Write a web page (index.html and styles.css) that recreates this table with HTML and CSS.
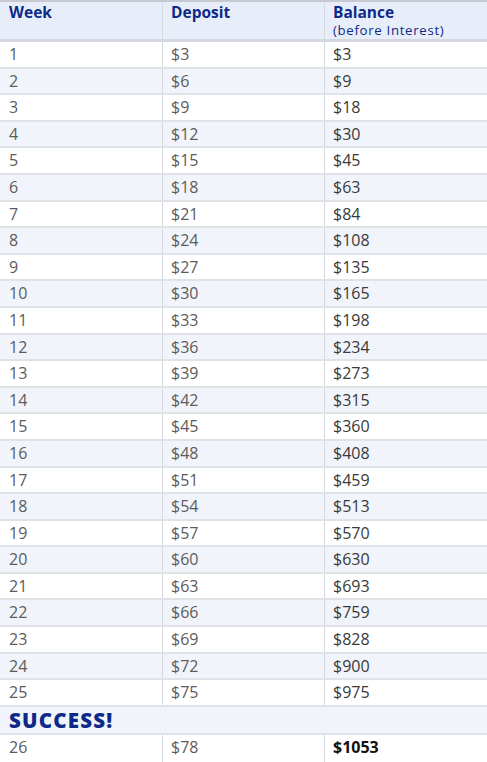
FILE: index.html
```html
<!DOCTYPE html>
<html>
<head>
<meta charset="utf-8">
<link rel="stylesheet" href="styles.css">
</head>
<body>
<div class="savings">
  <div class="row head">
    <div class="cell">Week</div>
    <div class="cell">Deposit</div>
    <div class="cell">Balance<span class="sub">(before Interest)</span></div>
  </div>
  <div class="row"><div class="cell">1</div><div class="cell">$3</div><div class="cell bal">$3</div></div>
  <div class="row alt"><div class="cell">2</div><div class="cell">$6</div><div class="cell bal">$9</div></div>
  <div class="row"><div class="cell">3</div><div class="cell">$9</div><div class="cell bal">$18</div></div>
  <div class="row alt"><div class="cell">4</div><div class="cell">$12</div><div class="cell bal">$30</div></div>
  <div class="row"><div class="cell">5</div><div class="cell">$15</div><div class="cell bal">$45</div></div>
  <div class="row alt"><div class="cell">6</div><div class="cell">$18</div><div class="cell bal">$63</div></div>
  <div class="row"><div class="cell">7</div><div class="cell">$21</div><div class="cell bal">$84</div></div>
  <div class="row alt"><div class="cell">8</div><div class="cell">$24</div><div class="cell bal">$108</div></div>
  <div class="row"><div class="cell">9</div><div class="cell">$27</div><div class="cell bal">$135</div></div>
  <div class="row alt"><div class="cell">10</div><div class="cell">$30</div><div class="cell bal">$165</div></div>
  <div class="row"><div class="cell">11</div><div class="cell">$33</div><div class="cell bal">$198</div></div>
  <div class="row alt"><div class="cell">12</div><div class="cell">$36</div><div class="cell bal">$234</div></div>
  <div class="row"><div class="cell">13</div><div class="cell">$39</div><div class="cell bal">$273</div></div>
  <div class="row alt"><div class="cell">14</div><div class="cell">$42</div><div class="cell bal">$315</div></div>
  <div class="row"><div class="cell">15</div><div class="cell">$45</div><div class="cell bal">$360</div></div>
  <div class="row alt"><div class="cell">16</div><div class="cell">$48</div><div class="cell bal">$408</div></div>
  <div class="row"><div class="cell">17</div><div class="cell">$51</div><div class="cell bal">$459</div></div>
  <div class="row alt"><div class="cell">18</div><div class="cell">$54</div><div class="cell bal">$513</div></div>
  <div class="row"><div class="cell">19</div><div class="cell">$57</div><div class="cell bal">$570</div></div>
  <div class="row alt"><div class="cell">20</div><div class="cell">$60</div><div class="cell bal">$630</div></div>
  <div class="row"><div class="cell">21</div><div class="cell">$63</div><div class="cell bal">$693</div></div>
  <div class="row alt"><div class="cell">22</div><div class="cell">$66</div><div class="cell bal">$759</div></div>
  <div class="row"><div class="cell">23</div><div class="cell">$69</div><div class="cell bal">$828</div></div>
  <div class="row alt"><div class="cell">24</div><div class="cell">$72</div><div class="cell bal">$900</div></div>
  <div class="row"><div class="cell">25</div><div class="cell">$75</div><div class="cell bal">$975</div></div>
  <div class="success">SUCCESS!</div>
  <div class="row final"><div class="cell">26</div><div class="cell">$78</div><div class="cell bal total">$1053</div></div>
</div>
</body>
</html>
```
FILE: styles.css
```css
html, body {
  margin: 0;
  padding: 0;
  background: #ffffff;
}
body {
  font-family: "Open Sans", Lato, sans-serif;
}
.savings {
  width: 487px;
  display: flex;
  flex-direction: column;
}
.row {
  display: grid;
  grid-template-columns: 162px 162px 163px;
  height: 26.6px;
  box-sizing: border-box;
  border-bottom: 2px solid #dfe2e7;
}
.row.alt { background: #f1f4fa; }
.cell {
  padding-left: 8px;
  border-left: 1px solid #d6d9de;
  font-size: 16px;
  line-height: 24px;
  color: #5c5c5c;
  white-space: nowrap;
}
.cell:first-child { border-left: none; padding-left: 9px; }
.cell.bal { color: #3a3a3a; }
.row.head {
  height: 42px;
  background: #e8eef9;
  border-top: 2px solid #c6c9cf;
  border-bottom: 3px solid #d3d7de;
}
.head .cell {
  color: #0d2a88;
  font-size: 15.5px;
  font-weight: 700;
  line-height: 18px;
  padding-top: 1px;
}
.sub {
  display: block;
  margin-top: 2px;
  font-size: 13.2px;
  font-weight: 400;
  line-height: 15px;
  letter-spacing: 0.7px;
}
.success {
  height: 28px;
  box-sizing: border-box;
  background: #f1f4fa;
  border-bottom: 2px solid #dfe2e7;
  padding-left: 9px;
  color: #0d2a88;
  font-size: 20.5px;
  font-weight: 800;
  line-height: 26px;
  letter-spacing: 1.2px;
}
.row.final {
  height: 27px;
  border-bottom: none;
}
.cell.total {
  color: #111111;
  font-weight: 700;
}
```
